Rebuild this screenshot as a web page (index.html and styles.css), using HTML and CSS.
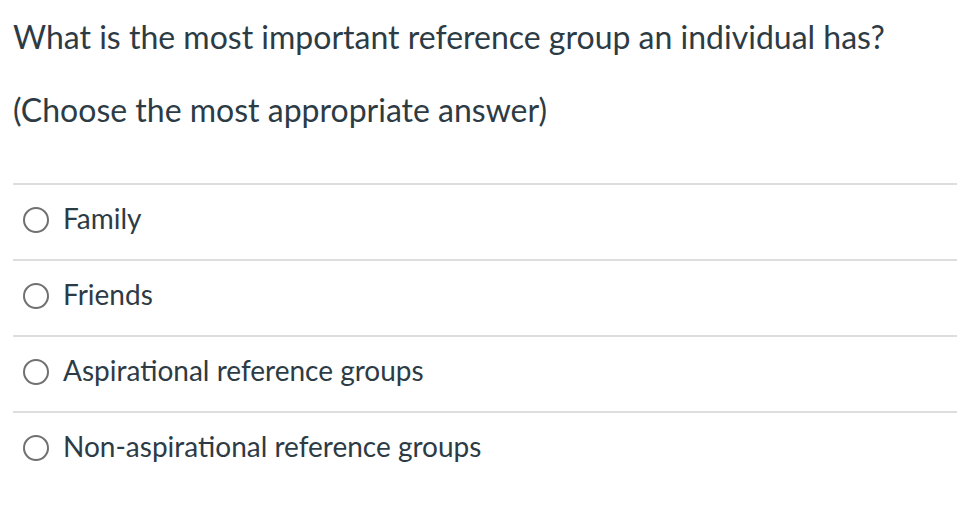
FILE: index.html
```html
<!DOCTYPE html>
<html>
<head>
<meta charset="utf-8">
<link rel="stylesheet" href="styles.css">
</head>
<body>
<div class="quiz">
  <div class="question">
    <p class="q-line">What is the most important reference group an individual has?</p>
    <p class="q-line">(Choose the most appropriate answer)</p>
  </div>
  <div class="answers">
    <label class="answer"><span class="radio"></span><span class="label">Family</span></label>
    <label class="answer"><span class="radio"></span><span class="label">Friends</span></label>
    <label class="answer"><span class="radio"></span><span class="label">Aspirational reference groups</span></label>
    <label class="answer"><span class="radio"></span><span class="label">Non-aspirational reference groups</span></label>
  </div>
</div>
</body>
</html>
```
FILE: styles.css
```css
html, body {
  margin: 0;
  padding: 0;
  background: #ffffff;
}
body {
  font-family: Lato, "Open Sans", sans-serif;
  color: #2d3b45;
}
.quiz {
  padding: 0 0 0 13px;
}
.question {
  padding: 19px 0 0 0;
  height: 183px;
  box-sizing: border-box;
}
.q-line {
  margin: 0 0 37px 0;
  font-size: 32px;
  line-height: 36px;
}
.answers {
  display: flex;
  flex-direction: column;
}
.answer {
  display: flex;
  align-items: center;
  height: 76px;
  border-top: 2px solid #dddddd;
  box-sizing: border-box;
  padding: 0 0 4px 10px;
}
.radio {
  width: 26px;
  height: 26px;
  box-sizing: border-box;
  border: 2px solid #707070;
  border-radius: 50%;
  margin-right: 14px;
  flex: none;
}
.label {
  font-size: 28px;
  line-height: 32px;
  padding-bottom: 4px;
}
```
